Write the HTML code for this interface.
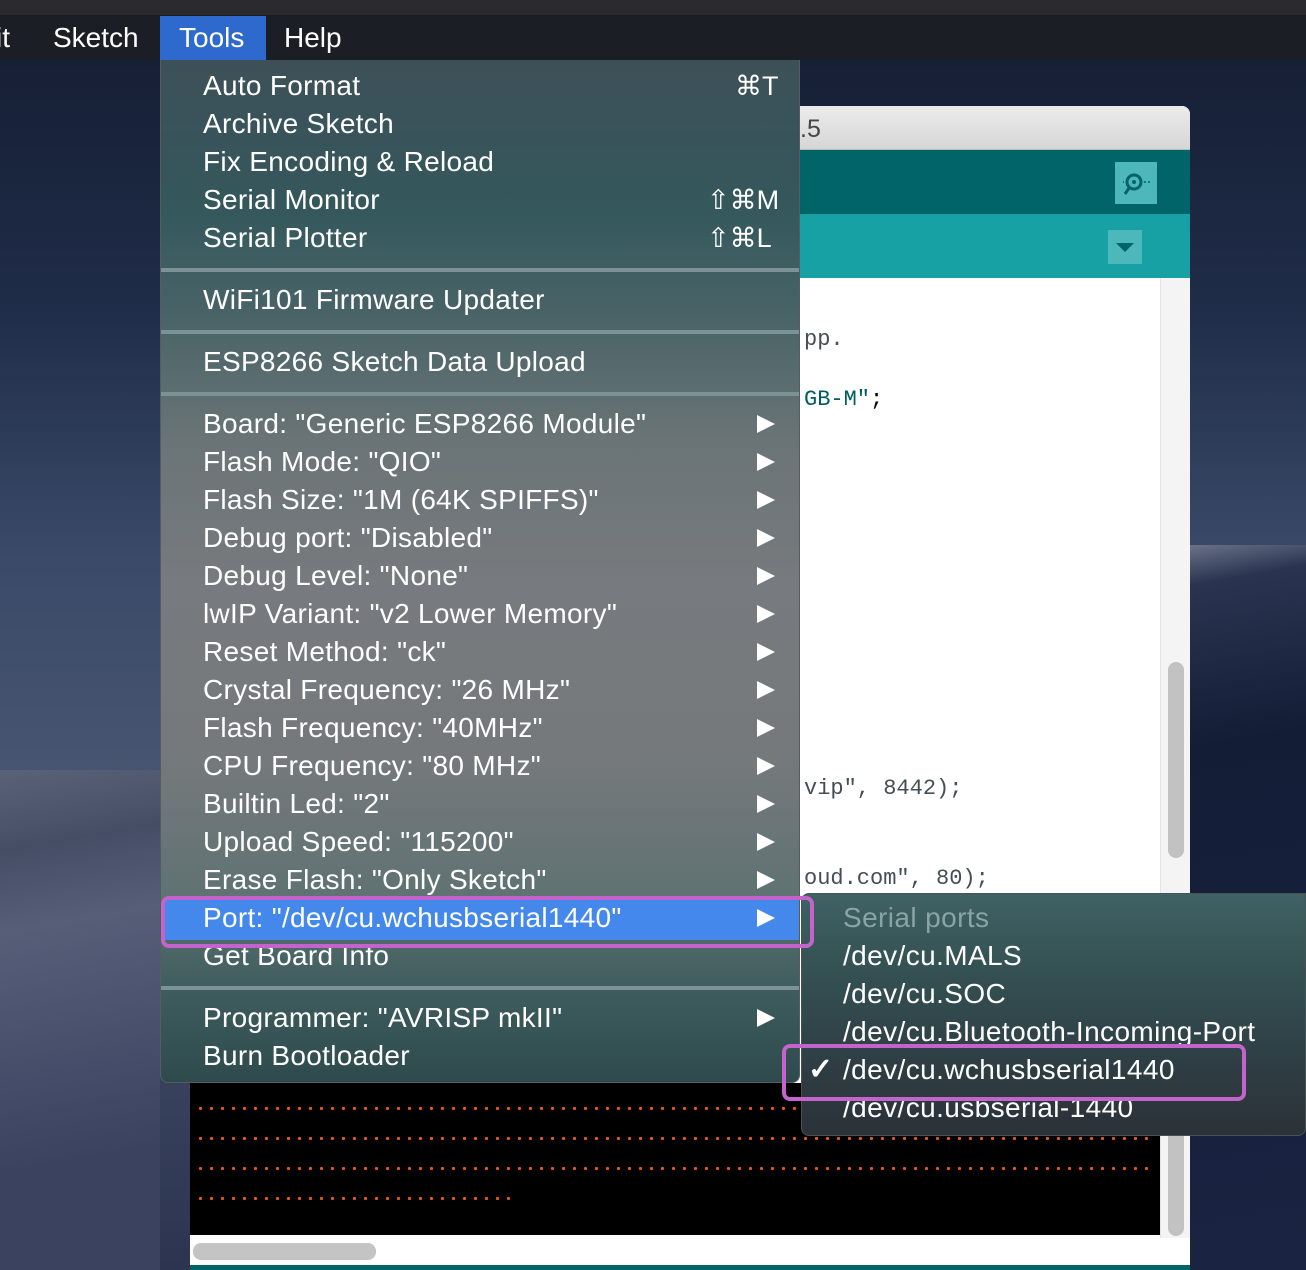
<!DOCTYPE html>
<html><head><meta charset="utf-8"><style>
*{margin:0;padding:0;box-sizing:border-box}
body{width:1306px;height:1270px;overflow:hidden;position:relative;font-family:"Liberation Sans",sans-serif;
background:linear-gradient(180deg,#141c30 0px,#1f2c48 300px,#3a4a68 560px,#4a5672 800px,#3e4862 1000px,#2c3450 1270px)}
.abs{position:absolute}
.mi{position:absolute;left:203px;height:38px;line-height:38px;font-size:28px;letter-spacing:0.3px;color:#fff;white-space:nowrap}
.sc{position:absolute;height:38px;line-height:38px;font-size:27px;color:#fff}
.ar{position:absolute;left:757px;width:0;height:0;border-top:9px solid transparent;border-bottom:9px solid transparent;border-left:18px solid #fff}
.sep{position:absolute;left:161px;width:638px;height:4px;background:#7b9396}
.si{position:absolute;left:843px;height:38px;line-height:38px;font-size:28px;letter-spacing:0.4px;color:#fff;white-space:nowrap}
.code{position:absolute;left:804px;font-family:"Liberation Mono",monospace;font-size:22px;color:#434f54}
.dots{position:absolute;left:195px;height:3px;background-image:radial-gradient(circle,#e8561a 1.5px,transparent 1.8px);background-size:11px 3px}
</style></head><body>
<div class="abs" style="left:1190px;top:545px;width:116px;height:725px;background:linear-gradient(170deg,#6a7288 0px,#2a3450 40px,#141d36 200px,#1a2442 725px)"></div>
<div class="abs" style="left:0;top:770px;width:160px;height:500px;background:linear-gradient(170deg,#5a6278 0px,#464e66 80px,#565e78 160px,#3a4260 400px)"></div>
<div class="abs" style="left:0;top:0;width:1306px;height:15px;background:#2b2b2f"></div>
<div class="abs" style="left:0;top:15px;width:1306px;height:45px;background:#1c1e25"></div>
<div class="abs" style="left:160px;top:16px;width:106px;height:44px;background:#2e6acd"></div>
<div class="abs" style="left:-4px;top:15px;height:45px;line-height:46px;font-size:28px;color:#fff">it</div>
<div class="abs" style="left:53px;top:15px;height:45px;line-height:46px;font-size:28px;color:#fff">Sketch</div>
<div class="abs" style="left:179px;top:15px;height:45px;line-height:46px;font-size:28px;color:#fff">Tools</div>
<div class="abs" style="left:284px;top:15px;height:45px;line-height:46px;font-size:28px;color:#fff">Help</div>
<div class="abs" style="left:190px;top:106px;width:1000px;height:1164px;background:#fff;border-radius:8px 8px 0 0;overflow:hidden">
 <div class="abs" style="left:0;top:0;width:1000px;height:44px;background:linear-gradient(#ececec,#d6d6d6);border-bottom:1px solid #bbb"></div>
 <div class="abs" style="left:610px;top:9px;font-size:25px;color:#444">.5</div>
 <div class="abs" style="left:0;top:44px;width:1000px;height:64px;background:#006468"></div>
 <div class="abs" style="left:925px;top:56px;width:42px;height:42px;background:#4db7bb"></div>
 <svg class="abs" style="left:930px;top:62px" width="34" height="30" viewBox="0 0 34 30"><circle cx="14" cy="14" r="7" fill="none" stroke="#006468" stroke-width="3"/><circle cx="14" cy="14" r="2" fill="#006468"/><path d="M9 20 L5 26" stroke="#006468" stroke-width="3"/><path d="M24 14h2M28 14h2M3 14h1" stroke="#006468" stroke-width="1.5"/></svg>
 <div class="abs" style="left:0;top:108px;width:1000px;height:64px;background:#17a1a5"></div>
 <div class="abs" style="left:918px;top:124px;width:34px;height:34px;background:#4cb8bb"></div>
 <div class="abs" style="left:926px;top:137px;width:0;height:0;border-left:9px solid transparent;border-right:9px solid transparent;border-top:9px solid #006468"></div>
 <div class="abs" style="left:970px;top:172px;width:30px;height:960px;background:#f4f4f4;border-left:1px solid #e4e4e4"></div>
 <div class="abs" style="left:978px;top:556px;width:16px;height:196px;background:#c2c2c2;border-radius:8px"></div>
 <div class="abs" style="left:978px;top:1000px;width:16px;height:130px;background:#c2c2c2;border-radius:8px"></div>
 <div class="abs" style="left:0;top:977px;width:970px;height:152px;background:#000"></div>
 <div class="abs" style="left:0;top:1129px;width:970px;height:30px;background:#fff"></div>
 <div class="abs" style="left:3px;top:1137px;width:183px;height:17px;background:#c4c4c4;border-radius:8px"></div>
 <div class="abs" style="left:0;top:1159px;width:1000px;height:5px;background:#006468"></div>
</div>
<div class="code" style="top:327px">pp.</div>
<div class="code" style="top:387px;color:#005c5f">GB-M"<span style="color:#000">;</span></div>
<div class="code" style="top:776px">vip", 8442);</div>
<div class="code" style="top:866px">oud.com", 80);</div>
<div class="dots" style="top:1107px;width:960px"></div>
<div class="dots" style="top:1137px;width:960px"></div>
<div class="dots" style="top:1167px;width:960px"></div>
<div class="dots" style="top:1197px;width:315px"></div>
<div class="abs" style="left:160px;top:60px;width:640px;height:1023px;border:1px solid #555d60;border-top:none;border-radius:0 0 8px 8px;
background:linear-gradient(180deg,#3d5058 0px,#34585c 150px,#4a6468 260px,#6a7476 380px,#777a7e 520px,#75797c 700px,#5f7272 840px,#3e5c5e 930px,#2e4a4c 1023px)"></div>
<div class="sep" style="top:268px"></div>
<div class="sep" style="top:330px"></div>
<div class="sep" style="top:392px"></div>
<div class="sep" style="top:986px"></div>
<div class="abs" style="left:165px;top:899px;width:634px;height:41px;background:#4488ec"></div>
<div class="mi" style="top:67px">Auto Format</div><div class="sc" style="left:735px;top:67px">⌘T</div>
<div class="mi" style="top:105px">Archive Sketch</div>
<div class="mi" style="top:143px">Fix Encoding &amp; Reload</div>
<div class="mi" style="top:181px">Serial Monitor</div><div class="sc" style="left:707px;top:181px">⇧⌘M</div>
<div class="mi" style="top:219px">Serial Plotter</div><div class="sc" style="left:707px;top:219px">⇧⌘L</div>
<div class="mi" style="top:281px">WiFi101 Firmware Updater</div>
<div class="mi" style="top:343px">ESP8266 Sketch Data Upload</div>
<div class="mi" style="top:405px">Board: "Generic ESP8266 Module"</div><div class="ar" style="top:415px"></div>
<div class="mi" style="top:443px">Flash Mode: "QIO"</div><div class="ar" style="top:453px"></div>
<div class="mi" style="top:481px">Flash Size: "1M (64K SPIFFS)"</div><div class="ar" style="top:491px"></div>
<div class="mi" style="top:519px">Debug port: "Disabled"</div><div class="ar" style="top:529px"></div>
<div class="mi" style="top:557px">Debug Level: "None"</div><div class="ar" style="top:567px"></div>
<div class="mi" style="top:595px">lwIP Variant: "v2 Lower Memory"</div><div class="ar" style="top:605px"></div>
<div class="mi" style="top:633px">Reset Method: "ck"</div><div class="ar" style="top:643px"></div>
<div class="mi" style="top:671px">Crystal Frequency: "26 MHz"</div><div class="ar" style="top:681px"></div>
<div class="mi" style="top:709px">Flash Frequency: "40MHz"</div><div class="ar" style="top:719px"></div>
<div class="mi" style="top:747px">CPU Frequency: "80 MHz"</div><div class="ar" style="top:757px"></div>
<div class="mi" style="top:785px">Builtin Led: "2"</div><div class="ar" style="top:795px"></div>
<div class="mi" style="top:823px">Upload Speed: "115200"</div><div class="ar" style="top:833px"></div>
<div class="mi" style="top:861px">Erase Flash: "Only Sketch"</div><div class="ar" style="top:871px"></div>
<div class="mi" style="top:899px">Port: "/dev/cu.wchusbserial1440"</div><div class="ar" style="top:909px"></div>
<div class="mi" style="top:942px;height:24px;overflow:hidden;line-height:28px">Get Board Info</div>
<div class="mi" style="top:999px">Programmer: "AVRISP mkII"</div><div class="ar" style="top:1009px"></div>
<div class="mi" style="top:1037px">Burn Bootloader</div>
<div class="abs" style="left:801px;top:893px;width:505px;height:243px;border:1px solid #4a5254;border-radius:8px 0 8px 8px;
background:linear-gradient(180deg,#3f6264 0px,#345052 80px,#2e3e44 170px,#2c3138 243px)"></div>
<div class="si" style="top:899px;color:#8aa4a6">Serial ports</div>
<div class="si" style="top:937px">/dev/cu.MALS</div>
<div class="si" style="top:975px">/dev/cu.SOC</div>
<div class="si" style="top:1013px">/dev/cu.Bluetooth-Incoming-Port</div>
<div class="si" style="top:1051px">/dev/cu.wchusbserial1440</div>
<div class="si" style="left:808px;top:1051px;font-size:30px;font-weight:bold">✓</div>
<div class="si" style="top:1092px;height:28px;line-height:32px;overflow:hidden">/dev/cu.usbserial-1440</div>
<div class="abs" style="left:161px;top:896px;width:653px;height:52px;border:4px solid #c563cc;border-radius:8px"></div>
<div class="abs" style="left:782px;top:1044px;width:464px;height:57px;border:4px solid #c563cc;border-radius:8px"></div>
</body></html>
